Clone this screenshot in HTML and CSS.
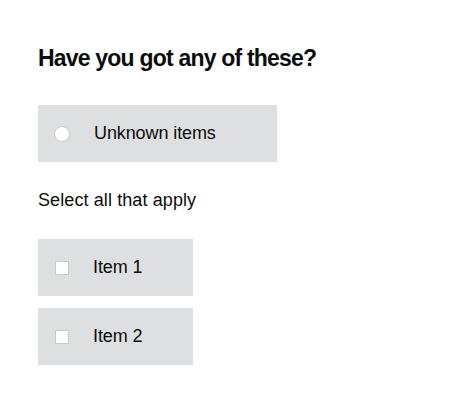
FILE: index.html
```html
<!DOCTYPE html>
<html>
<head>
<meta charset="utf-8">
<link rel="stylesheet" href="styles.css">
</head>
<body>
<main class="page">
  <h1 class="title">Have you got any of these?</h1>
  <label class="option option-wide">
    <span class="radio"></span>
    <span class="option-label">Unknown items</span>
  </label>
  <p class="hint">Select all that apply</p>
  <div class="checks">
    <label class="option option-narrow">
      <span class="checkbox"></span>
      <span class="option-label">Item 1</span>
    </label>
    <label class="option option-narrow">
      <span class="checkbox"></span>
      <span class="option-label">Item 2</span>
    </label>
  </div>
</main>
</body>
</html>
```
FILE: styles.css
```css
html, body {
  margin: 0;
  padding: 0;
  background: #ffffff;
}
.page {
  padding: 42px 0 0 38px;
  font-family: "Liberation Sans", Arial, sans-serif;
  color: #0b0c0c;
}
.title {
  margin: 0;
  font-size: 23px;
  line-height: 32px;
  font-weight: 700;
  letter-spacing: -0.8px;
}
.option {
  display: flex;
  align-items: center;
  box-sizing: border-box;
  height: 57px;
  background: #dedfe0;
  padding-left: 17px;
}
.option-wide {
  width: 239px;
  margin-top: 31px;
}
.option-narrow {
  width: 155px;
}
.radio {
  width: 16px;
  height: 16px;
  border-radius: 50%;
  background: #ffffff;
  border: 1px solid #c8c9ca;
  box-sizing: border-box;
  margin-left: -1px;
}
.checkbox {
  width: 14px;
  height: 14px;
  background: #ffffff;
  border: 1px solid #c8c9ca;
  box-sizing: border-box;
}
.option-label {
  margin-left: 24px;
  font-size: 18px;
  letter-spacing: -0.1px;
}
.hint {
  margin: 26px 0 0 0;
  font-size: 18px;
  line-height: 24px;
  letter-spacing: 0.1px;
}
.checks {
  display: flex;
  flex-direction: column;
  gap: 12px;
  margin-top: 27px;
}
```
